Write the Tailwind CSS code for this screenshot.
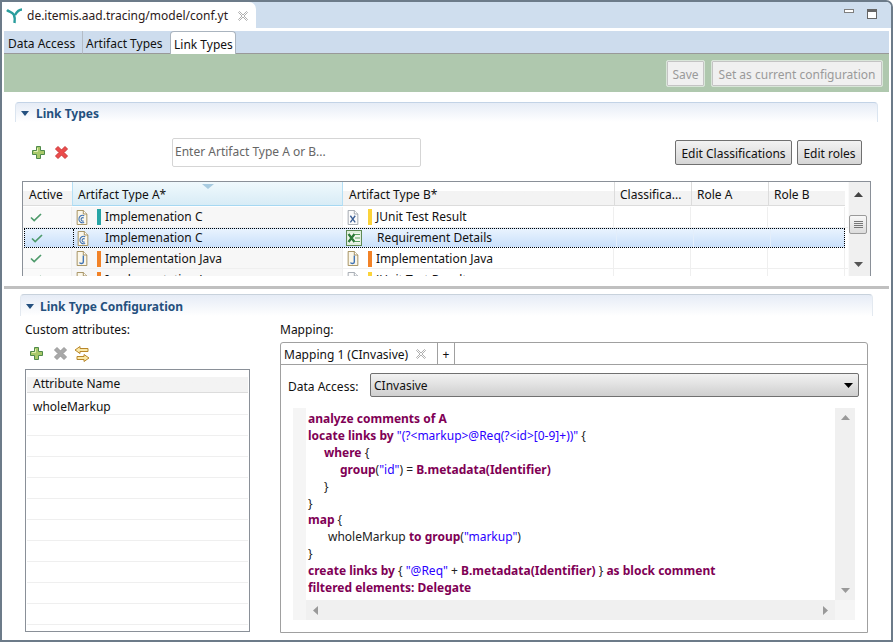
<!DOCTYPE html>
<html><head><meta charset="utf-8">
<script src="https://cdn.jsdelivr.net/npm/@tailwindcss/browser@4"></script>
<title>conf.yt</title></head>
<body class="bg-white">
<svg class="hidden" width="0" height="0">
<symbol id="fc" viewBox="0 0 12 17"><path d="M.5.5h7l4 4v12H.5z" fill="#fbf7ea" stroke="#9c8550"/><path d="M7.5.5v4h4" fill="#fff" stroke="#9c8550"/><path d="M8.5 6.500C5 5 2.500 7.500 2.500 10.500s3 5 6 3.500M8 9C6 8 5 9.500 5 10.700s1.500 2.500 3 1.600" fill="none" stroke="#3f72b5" stroke-width="1.200"/></symbol>
<symbol id="fj" viewBox="0 0 12 17"><path d="M.5.5h7l4 4v12H.5z" fill="#fbf7ea" stroke="#9c8550"/><path d="M7.5.5v4h4" fill="#fff" stroke="#9c8550"/><path d="M7.500 5v7.500c0 2-3.500 2.300-4.300.5" fill="none" stroke="#3f72b5" stroke-width="1.600"/></symbol>
<symbol id="fx" viewBox="0 0 12 17"><path d="M.5.5h7l4 4v12H.5z" fill="#fbfbfb" stroke="#9aa0a8"/><path d="M7.5.5v4h4" fill="#fff" stroke="#9aa0a8"/><path d="M3 6.500l5.500 7.500M8.500 6.500L3 14" stroke="#3c5f95" stroke-width="1.500"/></symbol>
<symbol id="xl" viewBox="0 0 16 16"><rect x=".5" y=".5" width="15" height="15" fill="#dfeedd" stroke="#5f8a55"/><rect x="2" y="3" width="12" height="10" fill="#f2f7ee"/><path d="M2.500 4l6 8M8.500 4l-6 8" stroke="#2d7a38" stroke-width="2.200"/><path d="M9 4.500h5M9 8h5M9 11.500h5" stroke="#5aa05f"/></symbol>
<symbol id="plus" viewBox="0 0 13 13"><path d="M4.500.5h4v4h4v4h-4v4h-4v-4h-4v-4h4z" fill="#a9c96a" stroke="#4f8a4a"/><path d="M5.500 2v3.500H2" fill="none" stroke="#e4efb0"/></symbol>
<symbol id="del" viewBox="0 0 13 13"><path d="M3 .5l3.500 3.500L10 .5l2.500 2.500L9 6.500l3.500 3.500-2.500 2.500L6.500 9 3 12.500.5 10 4 6.500.5 3z" fill="#ec4b4b" stroke="#c83838"/></symbol>
<symbol id="delg" viewBox="0 0 13 13"><path d="M3 .5l3.500 3.500L10 .5l2.500 2.500L9 6.500l3.500 3.500-2.500 2.500L6.500 9 3 12.500.5 10 4 6.500.5 3z" fill="#a8a8a8" stroke="#989898"/></symbol>
<symbol id="swap" viewBox="0 0 16 16"><path d="M6 .5L1 4l5 3.500V5.500h8v-3H6zM10 8.500l5 3.500-5 3.500v-2H3v-3h7z" fill="#fbe9a8" stroke="#b8862a"/></symbol>
<symbol id="chk" viewBox="0 0 12 9"><path d="M1 4.500L4.200 7.500 11 1" fill="none" stroke="#4d9a6b" stroke-width="1.700"/></symbol>
<symbol id="closex" viewBox="0 0 10 10"><path d="M1.500.5L5 4 8.500.5l1 1L6 5l3.500 3.500-1 1L5 6 1.500 9.500l-1-1L4 5 .5 1.500z" fill="#fff" stroke="#9a9a9a" stroke-width=".8"/></symbol>
</svg>

<div class="w-[893px] h-[642px] overflow-hidden border-2 border-[#6c7b89] rounded-tr-[7px] bg-white text-[12px] leading-[16px] text-[#111] font-['Noto_Sans',sans-serif]">

  <!-- editor tab bar -->
  <div class="flex h-[26px] bg-[#cfdeee]">
    <div class="w-[254px] bg-white rounded-tr-[7px] flex items-center pl-[4px]">
      <svg width="17" height="16" viewBox="0 0 17 16" class="mr-[4px] mt-[2px]"><path d="M1 2c2 2 5 1.500 7 5M16 1.500C14 1.500 11 3.500 9 7M8 7c1 2.500 1 5 .5 8" fill="none" stroke="#2a9d9d" stroke-width="2.500"/></svg>
      <span class="text-[#2d1a1a] pt-[2px]">de.itemis.aad.tracing/model/conf.yt</span>
      <svg width="10" height="10" class="ml-auto mr-[8px] mt-[1px]"><use href="#closex"/></svg>
    </div>
    <div class="flex-1 flex items-start justify-end pr-[14px] pt-[7px] gap-[13px]">
      <div class="w-[10px] h-[4px] border border-[#7f7f7f] bg-white"></div>
      <div class="w-[10px] h-[10px] border border-[#666] border-t-[3px] bg-white"></div>
    </div>
  </div>

  <div class="ml-[2px] w-[885px] mt-[3px]">
    <!-- inner tabs -->
    <div class="flex h-[23px] bg-[#cddced]">
      <div class="w-[79px] pl-[4px] pt-[3px] flex items-center border-r border-[#b4bcc6] border-b border-b-[#999]">Data Access</div>
      <div class="w-[87px] pl-[3px] pt-[3px] flex items-center border-b border-[#999]">Artifact Types</div>
      <div class="w-[66px] bg-white rounded-t-[4px] border border-b-0 border-[#aab4bf] flex items-center pl-[3px] pt-[3px]">Link Types</div>
      <div class="flex-1 border-b border-[#999]"></div>
    </div>
    <!-- green bar -->
    <div class="h-[38px] bg-[#afc8ae] flex items-start justify-end gap-[6px] pr-[6px] pt-[6px]">
      <button class="h-[27px] w-[39px] pt-[2px] border border-[#d9e6d9] bg-[#f0f0f0] outline outline-[#c4c4c4] -outline-offset-2 text-[#9a9a9a] rounded-[2px] text-[12px]">Save</button>
      <button class="h-[27px] w-[172px] pt-[2px] border border-[#d9e6d9] bg-[#f0f0f0] outline outline-[#c4c4c4] -outline-offset-2 text-[#9a9a9a] rounded-[2px] text-[12px]">Set as current configuration</button>
    </div>
  </div>

  <!-- Section 1 -->
  <div class="ml-[13px] mt-[10px] w-[863px] h-[20px] border-t border-x border-[#c3d3e6] rounded-t-[4px] [border-left-color:#dbe5f0] [border-right-color:#dbe5f0] bg-gradient-to-b from-[#e6ecf6] to-white flex items-center pl-[5px] pt-[2px]">
    <svg width="8" height="5" viewBox="0 0 8 5" class="mr-[7px]"><path d="M0 0h8L4 5z" fill="#24507f"/></svg>
    <span class="font-bold text-[#25507e]">Link Types</span>
  </div>
  <div class="flex items-start mt-[16px] h-[29px]">
    <svg width="13" height="13" class="ml-[30px] mt-[8px]"><use href="#plus"/></svg>
    <svg width="13" height="13" class="ml-[10px] mt-[8px]"><use href="#del"/></svg>
    <div class="ml-[104px] w-[249px] h-[29px] border border-[#d5d5d5] rounded-[2px] flex items-center pl-[2px] pb-[2px] text-[#666]">Enter Artifact Type A or B...</div>
    <button class="ml-[254px] mt-[2px] w-[117px] h-[25px] pt-[2px] rounded-[2px] border border-[#707070] bg-gradient-to-b from-[#f2f2f2] to-[#d6d6d6] text-[12px]">Edit Classifications</button>
    <button class="ml-[5px] mt-[2px] w-[65px] h-[25px] pt-[2px] rounded-[2px] border border-[#707070] bg-gradient-to-b from-[#f2f2f2] to-[#d6d6d6] text-[12px]">Edit roles</button>
  </div>

  <!-- Table -->
  <div class="relative ml-[20px] mt-[14px] w-[849px] h-[95px] overflow-hidden border-x border-t border-[#8a9098] flex">
    <div class="w-[825px] shrink-0">
      <div class="grid grid-cols-[49px_271px_271px_77px_77px_77px] h-[24px]">
        <div class="flex items-end pb-[2px] pl-[6px] bg-gradient-to-b from-white from-40% to-[#f3f3f3] to-40% border-b border-[#dcdcdc]">Active</div>
        <div class="relative flex items-end pb-[2px] pl-[5px] bg-gradient-to-b from-[#f0f9fd] to-[#d8ecf6] border-x border-[#b5dff5] border-b border-b-[#a6d8f2]">Artifact Type A*
          <svg width="12" height="5" viewBox="0 0 12 5" class="absolute left-[129px] top-[2px]"><path d="M0 0h12L6 5z" fill="#a8cbe0"/></svg>
        </div>
        <div class="flex items-end pb-[2px] pl-[6px] bg-gradient-to-b from-white from-40% to-[#f3f3f3] to-40% border-b border-[#dcdcdc]">Artifact Type B*</div>
        <div class="flex items-end pb-[2px] pl-[5px] bg-gradient-to-b from-white from-40% to-[#f3f3f3] to-40% border-b border-l border-[#dcdcdc]">Classifica...</div>
        <div class="flex items-end pb-[2px] pl-[5px] bg-gradient-to-b from-white from-40% to-[#f3f3f3] to-40% border-b border-l border-[#dcdcdc]">Role A</div>
        <div class="flex items-end pb-[2px] pl-[5px] bg-gradient-to-b from-white from-40% to-[#f3f3f3] to-40% border-b border-l border-[#dcdcdc]">Role B</div>
      </div>
      <div class="h-[1px]"></div>
      <!-- row 1 -->
      <div class="grid grid-cols-[49px_271px_271px_77px_77px_77px] h-[21px] border-b border-[#efefef]">
        <div class="flex items-center pl-[7px] bg-[#fafafa] border-r border-[#efefef]"><svg width="12" height="9"><use href="#chk"/></svg></div>
        <div class="flex items-center pl-[4px] bg-[#f7f7f7] border-r border-[#efefef]"><svg width="12" height="15"><use href="#fc"/></svg><span class="w-[4px] h-[16px] bg-[#27a5a5] ml-[9px] mr-[4px]"></span>Implemenation C</div>
        <div class="flex items-center pl-[4px] border-r border-[#efefef]"><svg width="12" height="15"><use href="#fx"/></svg><span class="w-[4px] h-[16px] bg-[#fbd33a] ml-[9px] mr-[4px]"></span>JUnit Test Result</div>
        <div class="border-r border-[#efefef]"></div><div class="border-r border-[#efefef]"></div><div class="border-r border-[#efefef]"></div>
      </div>
      <!-- row 2 selected -->
      <div class="relative grid grid-cols-[49px_271px_271px_77px_77px_77px] h-[20px] w-[821px] ml-[1px] border-y border-x border-dotted border-black bg-gradient-to-b from-[#e9f3fe] to-[#c9e0fb]">
        <div class="flex items-center pl-[6px] border-r border-dotted border-black"><svg width="12" height="9"><use href="#chk"/></svg></div>
        <div class="flex items-center pl-[3px]"><svg width="12" height="15"><use href="#fc"/></svg><span class="ml-[16px]">Implemenation C</span></div>
        <div class="flex items-center pl-[1px]"><svg width="16" height="16"><use href="#xl"/></svg><span class="ml-[15px]">Requirement Details</span></div>
        <div class="border-l border-[#e3eefb]"></div><div class="border-l border-[#e3eefb]"></div><div class="border-l border-[#e3eefb]"></div>
      </div>
      <!-- row 3 -->
      <div class="grid grid-cols-[49px_271px_271px_77px_77px_77px] h-[21px] border-b border-[#efefef]">
        <div class="flex items-center pl-[7px] bg-[#fafafa] border-r border-[#efefef]"><svg width="12" height="9"><use href="#chk"/></svg></div>
        <div class="flex items-center pl-[4px] pt-[1px] bg-[#f7f7f7] border-r border-[#efefef]"><svg width="12" height="15"><use href="#fj"/></svg><span class="w-[4px] h-[16px] bg-[#f28227] ml-[9px] mr-[4px]"></span>Implementation Java</div>
        <div class="flex items-center pl-[4px] pt-[1px] border-r border-[#efefef]"><svg width="12" height="15"><use href="#fj"/></svg><span class="w-[4px] h-[16px] bg-[#f28227] ml-[9px] mr-[4px]"></span>Implementation Java</div>
        <div class="border-r border-[#efefef]"></div><div class="border-r border-[#efefef]"></div><div class="border-r border-[#efefef]"></div>
      </div>
      <!-- row 4 -->
      <div class="grid grid-cols-[49px_271px_271px_77px_77px_77px] h-[21px]">
        <div class="flex items-center pl-[7px] bg-[#fafafa] border-r border-[#efefef]"><svg width="12" height="9"><use href="#chk"/></svg></div>
        <div class="flex items-center pl-[4px] bg-[#f7f7f7] border-r border-[#efefef]"><svg width="12" height="15"><use href="#fj"/></svg><span class="w-[4px] h-[16px] bg-[#f28227] ml-[9px] mr-[4px]"></span>Implementation Java</div>
        <div class="flex items-center pl-[4px] border-r border-[#efefef]"><svg width="12" height="15"><use href="#fx"/></svg><span class="w-[4px] h-[16px] bg-[#fbd33a] ml-[9px] mr-[4px]"></span>JUnit Test Result</div>
        <div class="border-r border-[#efefef]"></div><div class="border-r border-[#efefef]"></div><div class="border-r border-[#efefef]"></div>
      </div>
    </div>
    <!-- vscroll -->
    <div class="flex-1 bg-[#f0f0f0] flex flex-col items-center pr-[4px] border-l border-[#fafafa] h-[95px]">
      <svg width="9" height="5" viewBox="0 0 9 5" class="mt-[10px]"><path d="M0 5L4.500 0 9 5z" fill="#444"/></svg>
      <div class="mt-[18px] w-[18px] h-[19px] border border-[#9a9a9a] rounded-[2px] bg-gradient-to-b from-[#f8f8f8] to-[#dcdcdc] flex flex-col items-center justify-center gap-[1px]">
        <span class="w-[9px] h-[1px] bg-[#777]"></span><span class="w-[9px] h-[1px] bg-[#777]"></span><span class="w-[9px] h-[1px] bg-[#777]"></span><span class="w-[9px] h-[1px] bg-[#777]"></span>
      </div>
      <svg width="9" height="5" viewBox="0 0 9 5" class="mt-[28px]"><path d="M0 0L4.500 5 9 0z" fill="#555"/></svg>
    </div>
  </div>

  <!-- sash -->
  <div class="ml-[2px] w-[885px] h-[3px] bg-[#c0c0c0] mt-[10px]"></div>

  <!-- Section 2 -->
  <div class="ml-[18px] mt-[5px] w-[853px] h-[22px] border-t border-x border-[#c8d2dc] rounded-t-[4px] [border-left-color:#e3e9f0] [border-right-color:#e3e9f0] bg-gradient-to-b from-[#e6ecf6] to-white flex items-center pl-[5px] pt-[2px]">
    <svg width="8" height="5" viewBox="0 0 8 5" class="mr-[6px]"><path d="M0 0h8L4 5z" fill="#24507f"/></svg>
    <span class="font-bold text-[#25507e]">Link Type Configuration</span>
  </div>

  <div class="flex items-start mt-[6px]">
    <!-- left col -->
    <div class="ml-[23px] w-[225px]">
      <div class="h-[16px]">Custom attributes:</div>
      <div class="flex items-center h-[17px] mt-[7px] ml-[5px] gap-[11px]">
        <svg width="13" height="13"><use href="#plus"/></svg>
        <svg width="13" height="13"><use href="#delg"/></svg>
        <svg width="16" height="16" class="-ml-[4px]"><use href="#swap"/></svg>
      </div>
      <div class="mt-[7px] h-[263px] overflow-hidden border border-[#8a9098] px-[1px] pt-[1px]">
        <div class="h-[22px] flex items-start pt-[5px] pl-[6px] bg-gradient-to-b from-white from-30% to-[#f3f3f3] to-30% border-b border-[#dcdcdc]">Attribute Name</div>
        <div class="h-[22px] flex items-start pl-[6px] pt-[6px] border-b border-[#efefef]">wholeMarkup</div>
        <div class="h-[21px] border-b border-[#efefef]"></div><div class="h-[21px] border-b border-[#efefef]"></div>
        <div class="h-[21px] border-b border-[#efefef]"></div><div class="h-[21px] border-b border-[#efefef]"></div>
        <div class="h-[21px] border-b border-[#efefef]"></div><div class="h-[21px] border-b border-[#efefef]"></div>
        <div class="h-[21px] border-b border-[#efefef]"></div><div class="h-[21px] border-b border-[#efefef]"></div>
        <div class="h-[21px] border-b border-[#efefef]"></div><div class="h-[21px] border-b border-[#efefef]"></div>
      </div>
    </div>
    <!-- right col -->
    <div class="ml-[30px] w-[588px]">
      <div class="h-[16px]">Mapping:</div>
      <div class="mt-[4px] h-[291px] border border-[#a0a0a0] rounded-t-[3px]">
        <div class="flex h-[22px] border-b border-[#a0a0a0]">
          <div class="w-[157px] border-r border-[#a0a0a0] flex items-center pl-[3px] pt-[3px]">Mapping 1 (CInvasive)<svg width="10" height="10" class="ml-[8px] -mt-[3px]"><use href="#closex"/></svg></div>
          <div class="w-[17px] border-r border-[#a0a0a0] flex items-center justify-center pt-[3px]">+</div>
        </div>
        <div class="flex items-center mt-[8px] h-[24px]">
          <span class="ml-[7px] w-[82px] pt-[3px]">Data Access:</span>
          <div class="w-[489px] h-[24px] rounded-[2px] border border-[#707070] bg-gradient-to-b from-[#f2f2f2] to-[#cfcfcf] flex items-center justify-between pl-[3px] pr-[5px]"><span class="pt-[2px]">CInvasive</span>
            <svg width="9" height="5" viewBox="0 0 9 5"><path d="M0 0h9L4.500 5z" fill="#000"/></svg>
          </div>
        </div>
        <div class="ml-[12px] mt-[11px] w-[562px] h-[212px] grid grid-cols-[13px_529px_20px] grid-rows-[192px_20px]">
          <div class="row-span-2 bg-[#f5f5f5]"></div>
          <div class="pl-[2px] pt-[3px] leading-[16.900px] overflow-hidden whitespace-pre text-[#222]"><b class="text-[#7f0055]">analyze comments of A</b>
<b class="text-[#7f0055]">locate links by</b> <span class="text-[#2a00ff]">"(?&lt;markup&gt;@Req(?&lt;id&gt;[0-9]+))"</span> {
<span class="ml-[16px]"><b class="text-[#7f0055]">where</b> {</span>
<span class="ml-[32px]"><b class="text-[#7f0055]">group</b>(<span class="text-[#2a00ff]">"id"</span>) = <b class="text-[#7f0055]">B.metadata(Identifier)</b></span>
<span class="ml-[16px]">}</span>
}
<b class="text-[#7f0055]">map</b> {
<span class="ml-[20px]">wholeMarkup <b class="text-[#7f0055]">to group</b>(<span class="text-[#2a00ff]">"markup"</span>)</span>
}
<b class="text-[#7f0055]">create links by</b> { <span class="text-[#2a00ff]">"@Req"</span> + <b class="text-[#7f0055]">B.metadata(Identifier)</b> } <b class="text-[#7f0055]">as block comment</b>
<b class="text-[#7f0055]">filtered elements: Delegate</b></div>
          <div class="bg-[#f0f0f0] flex flex-col items-center justify-between py-[7px]">
            <svg width="9" height="5" viewBox="0 0 9 5"><path d="M0 5L4.500 0 9 5z" fill="#999"/></svg>
            <svg width="9" height="5" viewBox="0 0 9 5"><path d="M0 0L4.500 5 9 0z" fill="#999"/></svg>
          </div>
          <div class="bg-[#f0f0f0] flex items-center justify-between px-[7px]">
            <svg width="5" height="9" viewBox="0 0 5 9"><path d="M5 0L0 4.500 5 9z" fill="#999"/></svg>
            <svg width="5" height="9" viewBox="0 0 5 9"><path d="M0 0L5 4.500 0 9z" fill="#999"/></svg>
          </div>
          <div class="bg-[#f5f5f5]"></div>
        </div>
      </div>
    </div>
  </div>
</div>
</body></html>
